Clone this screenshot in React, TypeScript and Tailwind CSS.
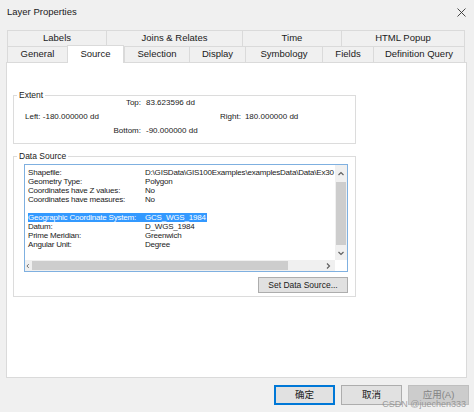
import React from 'react';

// Layer Properties dialog, Source tab
const topTabs = [
  { label: 'Labels', w: 'w-[99px]' },
  { label: 'Joins & Relates', w: 'w-[136px]' },
  { label: 'Time', w: 'w-[99px]' },
  { label: 'HTML Popup', w: 'w-[124px]' },
];

const bottomTabs = [
  { label: 'General', w: 'w-[60px]' },
  { label: 'Source', w: 'w-[57px]', active: true },
  { label: 'Selection', w: 'w-[65px]' },
  { label: 'Display', w: 'w-[56px]' },
  { label: 'Symbology', w: 'w-[77px]' },
  { label: 'Fields', w: 'w-[51px]' },
  { label: 'Definition Query', w: 'w-[92px]' },
];

const rows: { k: string; v: string; sel?: boolean }[] = [
  { k: 'Shapefile:', v: 'D:\\GISData\\GIS100Examples\\examplesData\\Data\\Ex30' },
  { k: 'Geometry Type:', v: 'Polygon' },
  { k: 'Coordinates have Z values:', v: 'No' },
  { k: 'Coordinates have measures:', v: 'No' },
  { k: '', v: '' },
  { k: 'Geographic Coordinate System:', v: 'GCS_WGS_1984', sel: true },
  { k: 'Datum:', v: 'D_WGS_1984' },
  { k: 'Prime Meridian:', v: 'Greenwich' },
  { k: 'Angular Unit:', v: 'Degree' },
];

const GroupBox: React.FC<{ title: string; className?: string; children: React.ReactNode }> = ({ title, className, children }) => (
  <div className={`relative border border-[#dcdcdc] ${className ?? ''}`}>
    <span className="absolute -top-[6px] left-[3px] bg-white px-[2px] text-[8.5px] leading-[11px]">{title}</span>
    {children}
  </div>
);

const Chevron: React.FC<{ dir: 'up' | 'down' | 'left' | 'right' }> = ({ dir }) => {
  const d = {
    up: 'M1.5 5 L4 2.5 L6.5 5',
    down: 'M1.5 3 L4 5.5 L6.5 3',
    left: 'M5 1.5 L2.5 4 L5 6.5',
    right: 'M3 1.5 L5.5 4 L3 6.5',
  }[dir];
  return (
    <svg width="8" height="8" viewBox="0 0 8 8">
      <path d={d} fill="none" stroke="#606060" strokeWidth="1.2" />
    </svg>
  );
};

export default function App() {
  return (
    <div className="relative w-[474px] h-[412px] overflow-hidden bg-[#f0f0f0] text-[#1a1a1a] font-['Liberation_Sans','Noto_Sans_CJK_SC',sans-serif]">
      {/* title bar */}
      <div className="h-[25px] flex items-center justify-between pl-[7px] pr-[8px]">
        <span className="text-[9.5px]">Layer Properties</span>
        <svg width="9" height="9" viewBox="0 0 9 9">
          <path d="M0.5 0.5 L8.5 8.5 M8.5 0.5 L0.5 8.5" stroke="#333" strokeWidth="0.9" />
        </svg>
      </div>

      {/* tabs */}
      <div className="pt-[5px] pl-[7px]">
        <div className="flex h-[16px]">
          {topTabs.map((t) => (
            <div
              key={t.label}
              className={`${t.w} flex items-center justify-center border-t border-l border-[#dadada] last:border-r text-[9.5px] bg-[#f0f0f0]`}
            >
              {t.label}
            </div>
          ))}
        </div>
        <div className="flex h-[16px] items-end">
          {bottomTabs.map((t) =>
            t.active ? (
              <div
                key={t.label}
                className={`${t.w} relative z-10 h-[18px] -mb-[1px] flex items-center justify-center pb-[1px] bg-white border-t border-l border-r border-[#dadada] text-[9.5px]`}
              >
                {t.label}
              </div>
            ) : (
              <div
                key={t.label}
                className={`${t.w} h-[16px] flex items-center justify-center border-t border-l border-[#dadada] last:border-r text-[9.5px] bg-[#f0f0f0]`}
              >
                {t.label}
              </div>
            )
          )}
        </div>
      </div>

      {/* panel */}
      <div className="ml-[6px] w-[461px] h-[316px] bg-white border border-[#dadada] pl-[6px] pt-[32px]">
        <GroupBox title="Extent" className="w-[343px] h-[49px] text-[8px] leading-[14px]">
          <div className="flex">
            <span className="w-[127px] text-right">Top:</span>
            <span className="ml-[5px]">83.623596 dd</span>
          </div>
          <div className="flex">
            <span className="w-[206px] pl-[11px]">Left: -180.000000 dd</span>
            <span>Right:</span>
            <span className="ml-[4px]">180.000000 dd</span>
          </div>
          <div className="flex">
            <span className="w-[127px] text-right">Bottom:</span>
            <span className="ml-[5px]">-90.000000 dd</span>
          </div>
        </GroupBox>

        <GroupBox title="Data Source" className="mt-[12px] w-[343px] h-[141px] pt-[7px] pl-[10px]">
          {/* listbox */}
          <div className="w-[324px] h-[108px] border border-[#7fb0e0] flex flex-col bg-white">
            <div className="flex flex-1 min-h-0">
              <div className="flex-1 overflow-hidden pt-[3px] pl-[3px] text-[8px] leading-[9px] tracking-[-0.2px] whitespace-nowrap">
                {rows.map((r, i) => (
                  <div key={i} className="h-[9px]">
                    <span className={`inline-flex ${r.sel ? 'bg-[#3399ff] text-white pr-[1px]' : ''}`}>
                      <span className="w-[117px]">{r.k}</span>
                      <span>{r.v}</span>
                    </span>
                  </div>
                ))}
              </div>
              <div className="w-[12px] bg-[#f0f0f0] flex flex-col items-center">
                <div className="h-[17px] flex items-center justify-center">
                  <Chevron dir="up" />
                </div>
                <div className="w-[10px] h-[63px] bg-[#cdcdcd]" />
                <div className="flex-1 flex items-center justify-center">
                  <Chevron dir="down" />
                </div>
              </div>
            </div>
            <div className="h-[11px] flex">
              <div className="flex-1 bg-[#f0f0f0] flex items-center">
                <div className="w-[6px] flex justify-center">
                  <Chevron dir="left" />
                </div>
                <div className="ml-[1px] w-[256px] h-[9px] bg-[#cdcdcd]" />
                <div className="flex-1 flex justify-end pr-[3px]">
                  <Chevron dir="right" />
                </div>
              </div>
              <div className="w-[12px] bg-white" />
            </div>
          </div>
          <div className="w-[324px] flex justify-end mt-[5px]">
            <button className="w-[90px] h-[16px] bg-[#e1e1e1] border border-[#adadad] text-[8.5px] leading-none">
              Set Data Source...
            </button>
          </div>
        </GroupBox>
      </div>

      {/* footer buttons */}
      <div className="flex justify-end gap-[6px] pt-[7px] pr-[5px] text-[9.5px]">
        <button className="w-[61px] h-[20px] bg-[#e1e1e1] border border-[#0078d7] shadow-[inset_0_0_0_1px_#0078d7]">确定</button>
        <button className="w-[61px] h-[20px] bg-[#e1e1e1] border border-[#adadad]">取消</button>
        <button className="w-[61px] h-[20px] bg-[#cccccc] border border-[#bfbfbf] text-[#838383]">应用(A)</button>
      </div>

      {/* watermark */}
      <span className="absolute right-[8px] bottom-[1px] text-[9px] text-[#8a8a8a]/80">CSDN @juechen333</span>
    </div>
  );
}
